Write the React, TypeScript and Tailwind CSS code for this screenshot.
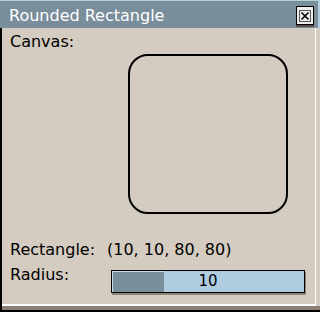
import React from "react";

const font = { fontFamily: '"DejaVu Sans", "Liberation Sans", sans-serif' };

function CloseButton() {
  return (
    <div className="w-[18px] h-[21px] flex flex-col">
      <div className="w-[18px] h-[19px] bg-[#eeeeee] border border-black flex items-center justify-center">
        <svg width="12" height="12" viewBox="0 0 12 12">
          <rect x="0.5" y="0.5" width="11" height="11" fill="none" stroke="#555" strokeWidth="1" />
          <path d="M2.5 2.5 L9.5 9.5 M9.5 2.5 L2.5 9.5" stroke="#000" strokeWidth="1.6" />
        </svg>
      </div>
      <div className="w-[18px] h-[2px] bg-[#5a4a4a]" />
    </div>
  );
}

export default function App() {
  return (
    <div
      className="w-[320px] h-[312px] flex flex-col bg-[#d4ccc0] text-[16px] text-black overflow-hidden"
      style={font}
    >
      {/* Title bar */}
      <div className="h-[28px] shrink-0 bg-[#7a8d9b] border-t border-r-2 border-[#b3cfe0] flex items-start justify-between pl-[9px] pr-[4px]">
        <span className="text-white leading-[18px] pt-[6px]">Rounded Rectangle</span>
        <div className="pt-[5px]">
          <CloseButton />
        </div>
      </div>

      {/* Body */}
      <div className="flex-1 flex border-l-2 border-black">
        <div className="flex-1 flex flex-col border-r border-b-2 border-white pl-[8px]">
          <div className="flex mt-[5px]">
            <div className="w-[98px] leading-[18px]">Canvas:</div>
            <div className="w-[200px] h-[200px] mt-[1px] p-[20px]">
              <div className="w-full h-full border-2 border-black rounded-[20px]" />
            </div>
          </div>
          <div className="flex mt-[7px] leading-[18px]">
            <span className="w-[97px]">Rectangle:</span>
            <span>(10, 10, 80, 80)</span>
          </div>
          <div className="flex mt-[7px]">
            <div className="w-[101px] leading-[18px]">Radius:</div>
            <div className="mt-[4px] w-[194px] h-[23px] border border-black bg-[#b0cce0] flex relative shadow-[1px_2px_0_#8c8577]">
              <div className="w-[52px] h-full bg-[#7a8d9b] border-l border-t border-[#c8dcea]" />
              <div className="absolute inset-0 flex items-center justify-center text-[15px] leading-none">
                10
              </div>
            </div>
          </div>
        </div>
        <div className="w-[4px]" />
      </div>

      {/* Bottom frame */}
      <div className="h-[4px] shrink-0 bg-[#8c8076] border-l-2 border-black" />
      <div className="h-[2px] shrink-0 bg-black" />
    </div>
  );
}
